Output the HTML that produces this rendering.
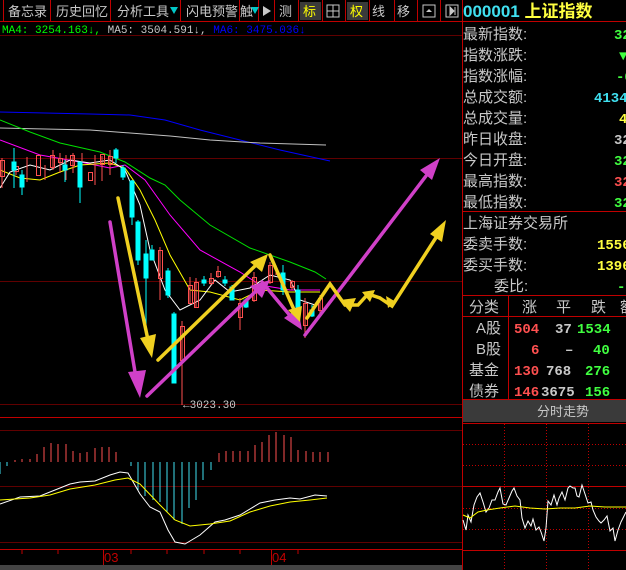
<!DOCTYPE html>
<html><head><meta charset="utf-8"><style>
body{margin:0;background:#000;width:626px;height:570px;overflow:hidden;position:relative;font-family:"Liberation Sans","WenQuanYi Zen Hei","Noto Sans CJK SC",sans-serif}
.t{position:absolute;white-space:nowrap;font-size:14px;color:#c8c8c8;line-height:16px}
</style></head><body>
<svg width="626" height="570" style="position:absolute;left:0;top:0" font-family="Liberation Sans, WenQuanYi Zen Hei, Noto Sans CJK SC, sans-serif">
<!-- toolbar -->
<g stroke="#c00000" fill="none">
<line x1="0" y1="21.5" x2="626" y2="21.5"/>
<line x1="3.5" y1="0" x2="3.5" y2="21"/><line x1="50.5" y1="0" x2="50.5" y2="21"/><line x1="110.5" y1="0" x2="110.5" y2="21"/><line x1="180.5" y1="0" x2="180.5" y2="21"/><line x1="239.5" y1="0" x2="239.5" y2="21"/><line x1="258.5" y1="0" x2="258.5" y2="21"/><line x1="274.5" y1="0" x2="274.5" y2="21"/><line x1="298.5" y1="0" x2="298.5" y2="21"/><line x1="322.5" y1="0" x2="322.5" y2="21"/><line x1="345.5" y1="0" x2="345.5" y2="21"/><line x1="369.5" y1="0" x2="369.5" y2="21"/><line x1="394.5" y1="0" x2="394.5" y2="21"/><line x1="417.5" y1="0" x2="417.5" y2="21"/><line x1="440.5" y1="0" x2="440.5" y2="21"/>
</g>
<rect x="300" y="2" width="21" height="18" fill="#3a3a3a"/><rect x="347" y="2" width="21" height="18" fill="#3a3a3a"/>
<g fill="#c8c8c8" font-size="13">
<text x="8" y="16">备忘录</text><text x="56" y="16">历史回忆</text><text x="117" y="16">分析工具</text><text x="186" y="16">闪电预警</text><text x="240" y="16">触</text><text x="279" y="16">测</text><text x="372" y="16">线</text><text x="397" y="16">移</text>
</g>
<text x="303" y="16" fill="#ffff00" font-size="13">标</text><text x="350" y="16" fill="#ffff00" font-size="13">权</text>
<path d="M170 7h8l-4 7z M251 7h8l-4 7z" fill="#00c8c8"/>
<path d="M263 6v10l8-5z" fill="#c8c8c8"/>
<rect x="327" y="5" width="12" height="12" fill="none" stroke="#c8c8c8"/><path d="M333 5v12M327 11h12" stroke="#c8c8c8"/>
<rect x="423" y="5" width="12" height="12" fill="none" stroke="#c8c8c8"/><path d="M426 12h6l-3-3z" fill="#c8c8c8"/>
<rect x="446" y="5" width="12" height="12" fill="none" stroke="#c8c8c8"/><path d="M450 7v8l4-4z M455 7v8" stroke="#c8c8c8" fill="#c8c8c8"/>
<!-- MA legend -->
<text x="2" y="33" font-size="11" font-family="Liberation Mono,monospace"><tspan fill="#00ff00">MA4: 3254.163↓,</tspan><tspan fill="#c8c8c8"> MA5: 3504.591↓,</tspan><tspan fill="#0000ff"> MA6: 3475.036↓</tspan></text>
<!-- main grid -->
<g stroke="#600000"><line x1="0" y1="35.5" x2="462" y2="35.5"/><line x1="0" y1="158.5" x2="462" y2="158.5"/><line x1="0" y1="281.5" x2="462" y2="281.5"/><line x1="0" y1="404.5" x2="462" y2="404.5"/><line x1="0" y1="430.5" x2="462" y2="430.5"/><line x1="0" y1="486.5" x2="462" y2="486.5"/><line x1="0" y1="542.5" x2="462" y2="542.5"/></g>
<line x1="0" y1="417.5" x2="462" y2="417.5" stroke="#c00000"/>
<line x1="0" y1="549.5" x2="462" y2="549.5" stroke="#c00000"/>
<line x1="462.5" y1="0" x2="462.5" y2="570" stroke="#c00000"/>
<rect x="0" y="565" width="462" height="5" fill="#444"/>
<g stroke="#c00000"><line x1="103.5" y1="549" x2="103.5" y2="565"/><line x1="271.5" y1="549" x2="271.5" y2="565"/><path d="M22 550v4M58 550v4M131 550v4M167 550v4M204 550v4M240 550v4M298 550v4"/></g>
<text x="104" y="562" fill="#c00000" font-size="13">03</text><text x="272" y="562" fill="#c00000" font-size="13">04</text>
<!-- MAs -->
<g fill="none" stroke-width="1">
<polyline stroke="#0000ff" points="0,112 90,114 130,115 165,120 200,130 240,140 280,150 330,161"/>
<polyline stroke="#c0c0c0" points="0,128 90,130 130,133 170,136 210,140 260,143 326,145"/>
<polyline stroke="#00e000" points="0,120 30,132 60,143 100,152 125,162 150,178 165,185 180,200 210,225 250,248 290,262 315,272 326,279"/>
<polyline stroke="#ff00ff" points="0,140 40,155 80,162 110,168 125,165 145,180 170,215 200,250 240,272 260,285 290,290 320,290"/>
<polyline stroke="#ffff00" points="0,170 20,178 40,180 60,172 80,165 110,163 125,168 140,190 155,220 170,255 190,290 210,292 240,300 260,290 290,292 320,292"/>
<polyline stroke="#ffffff" points="0,188 10,172 30,165 50,170 70,160 90,163 110,160 125,170 140,205 150,250 165,290 180,310 200,300 215,280 230,292 250,288 270,275 290,280 300,300 315,305 325,290"/>
</g>
<!-- candles -->
<g stroke-width="1">
<g stroke="#ff5050" fill="none">
<path d="M2 158v30M16 165v10M27 157v25M45 165v15M53 150v20M60 153v20M66 155v25M73 153v20M82 153v20M95 155v30M102 156v25M110 150v25M160 247v53M182 321v84M190 277v26M196 278v30M211 273v12M218 266v12M240 298v32M254 272v30M270 262v22M276 265v10M292 280v10M305 298v40M320 295v18"/>
<rect x="0.5" y="160.5" width="4" height="16"/><rect x="14.5" y="166.5" width="4" height="5"/><rect x="36.5" y="155.5" width="4" height="20"/><rect x="50.5" y="155.5" width="4" height="12"/><rect x="58.5" y="158.5" width="4" height="4"/><rect x="70.5" y="155.5" width="4" height="10"/><rect x="88.5" y="172.5" width="4" height="8"/><rect x="100.5" y="154.5" width="4" height="10"/><rect x="108.5" y="156.5" width="4" height="8"/><rect x="158.5" y="250.5" width="4" height="28"/><rect x="180.5" y="326.5" width="4" height="34"/><rect x="188.5" y="285.5" width="4" height="18"/><rect x="194.5" y="282.5" width="4" height="25"/><rect x="209.5" y="278.5" width="4" height="5"/><rect x="216.5" y="271.5" width="4" height="5"/><rect x="238.5" y="303.5" width="4" height="14"/><rect x="252.5" y="277.5" width="4" height="23"/><rect x="268.5" y="265.5" width="4" height="17"/><rect x="290.5" y="281.5" width="4" height="6"/><rect x="303.5" y="303.5" width="4" height="22"/><rect x="318.5" y="298.5" width="4" height="12"/>
</g>
<g stroke="#00ffff" fill="#00ffff">
<path d="M14 148v40M22 170v25M65 160v22M80 165v38M116 148v15M123 165v15M132 180v45M138 220v45M146 240v100M152 245v15M168 268v30M174 312v71M204 276v10M225 276v10M232 285v15M246 298v10M283 265v30M298 285v30M312 305v12"/>
<rect x="12" y="162" width="4" height="8"/><rect x="20" y="175" width="4" height="12"/><rect x="63" y="165" width="4" height="5"/><rect x="78" y="162" width="4" height="25"/><rect x="114" y="150" width="4" height="8"/><rect x="121" y="168" width="4" height="9"/><rect x="130" y="181" width="4" height="36"/><rect x="136" y="222" width="4" height="38"/><rect x="144" y="254" width="4" height="24"/><rect x="150" y="250" width="4" height="10"/><rect x="166" y="271" width="4" height="24"/><rect x="172" y="314" width="4" height="69"/><rect x="202" y="280" width="4" height="3"/><rect x="223" y="280" width="4" height="3"/><rect x="230" y="287" width="4" height="13"/><rect x="244" y="300" width="4" height="7"/><rect x="281" y="273" width="4" height="17"/><rect x="296" y="290" width="4" height="22"/><rect x="310" y="310" width="4" height="6"/>
</g>
</g>
<text x="183" y="408" fill="#c8c8c8" font-size="11" font-family="Liberation Mono,monospace">←3023.30</text>
<!-- arrows -->
<g stroke-width="3.5" fill="none" stroke-linecap="round">
<g stroke="#d040c8">
<line x1="110" y1="222" x2="136" y2="378"/><line x1="147" y1="396" x2="255" y2="292"/><line x1="262" y1="282" x2="292" y2="318"/><line x1="305" y1="335" x2="426" y2="176"/>
</g>
<g stroke="#f0d020">
<line x1="118" y1="198" x2="148" y2="340"/><line x1="158" y1="360" x2="255" y2="266"/><line x1="270" y1="255" x2="295" y2="312"/><polyline points="307,318 330,284 345,305 358,305 368,294 380,298 392,306 437,236"/>
</g>
</g>
<g stroke="none">
<g fill="#d040c8">
<polygon points="140,398 128,372 146,370"/><polygon points="270,280 250,286 262,298"/><polygon points="302,330 284,318 298,308"/><polygon points="440,158 420,170 432,180"/>
</g>
<g fill="#f0d020">
<polygon points="152,358 140,338 156,334"/><polygon points="268,254 250,262 262,272"/><polygon points="300,322 288,310 302,306"/><polygon points="350,312 340,300 356,298"/><polygon points="375,290 362,292 370,302"/><polygon points="396,302 386,296 388,308"/><polygon points="446,220 430,234 442,242"/>
</g>
</g>
<!-- MACD -->
<g stroke="#ff5050"><path d="M15 462v-2M22 462v-3M30 462v-3M37 462v-8M44 462v-15M51 462v-19M58 462v-18M66 462v-18M73 462v-11M80 462v-9M87 462v-10M95 462v-14M102 462v-15M109 462v-15M116 462v-10M219 462v-9M226 462v-11M233 462v-11M240 462v-11M248 462v-11M255 462v-17M262 462v-20M269 462v-27M276 462v-30M284 462v-27M291 462v-25M298 462v-12M306 462v-11M313 462v-10M320 462v-10M328 462v-10"/></g>
<g stroke="#40e0f0"><path d="M0 462v12M7 462v4M131 462v4M138 462v28M145 462v34M153 462v38M160 462v40M167 462v50M174 462v58M182 462v62M189 462v46M196 462v38M203 462v18M211 462v8"/></g>
<polyline fill="none" stroke="#ffffff" points="0,504 20,497 40,496 60,488 70,484 80,482 95,481 110,475 120,472 128,473 140,494 150,507 160,512 168,530 175,542 185,544 200,535 215,522 225,520 240,515 260,503 275,500 290,498 300,499 315,495 327,496"/>
<polyline fill="none" stroke="#ffff00" points="0,500 30,498 50,495 70,489 95,485 115,480 128,478 140,484 160,505 175,520 190,526 210,524 230,521 250,512 270,506 290,502 310,500 327,498"/>
<!-- right panel -->
<g stroke="#c00000"><line x1="462" y1="21.5" x2="626" y2="21.5"/><line x1="462" y1="211.5" x2="626" y2="211.5"/><line x1="462" y1="295.5" x2="626" y2="295.5"/><line x1="462" y1="316.5" x2="626" y2="316.5"/><line x1="462" y1="399.5" x2="626" y2="399.5"/><line x1="508.5" y1="296" x2="508.5" y2="399"/><line x1="462" y1="423.5" x2="626" y2="423.5"/></g>
<rect x="463" y="400" width="163" height="22" fill="#3a3a3a"/>
<text x="537" y="416" fill="#c8c8c8" font-size="13">分时走势</text>
<text x="463" y="17" font-size="17" font-weight="bold"><tspan fill="#40e0f0">000001</tspan><tspan fill="#ffff40"> 上证指数</tspan></text>
<g fill="#c8c8c8" font-size="15">
<text x="463" y="39">最新指数:</text><text x="463" y="60">指数涨跌:</text><text x="463" y="81">指数涨幅:</text><text x="463" y="102">总成交额:</text><text x="463" y="123">总成交量:</text><text x="463" y="144">昨日收盘:</text><text x="463" y="165">今日开盘:</text><text x="463" y="186">最高指数:</text><text x="463" y="207">最低指数:</text>
<text x="463" y="228">上海证券交易所</text><text x="463" y="249">委卖手数:</text><text x="463" y="270">委买手数:</text><text x="494" y="291">委比:</text>
<text x="469" y="312">分类</text><text x="522" y="312">涨</text><text x="556" y="312">平</text><text x="591" y="312">跌</text><text x="620" y="312">额</text>
<text x="476" y="333">A股</text><text x="476" y="354">B股</text><text x="469" y="375">基金</text><text x="469" y="396">债券</text>
</g>
<g font-size="14" font-weight="bold" font-family="Liberation Mono,monospace">
<text x="614" y="39" fill="#40ff40">32</text><text x="619" y="60" fill="#40ff40">▼</text><text x="616" y="81" fill="#40ff40">-0</text><text x="594" y="102" fill="#40e0f0">4134</text><text x="619" y="123" fill="#ffff40">4</text><text x="614" y="144" fill="#c8c8c8">32</text><text x="614" y="165" fill="#40ff40">32</text><text x="614" y="186" fill="#ff5050">32</text><text x="614" y="207" fill="#40ff40">32</text>
<text x="597" y="249" fill="#ffff40">1556</text><text x="597" y="270" fill="#ffff40">1396</text><text x="617" y="291" fill="#40ff40">-5</text>
<text x="514" y="333" fill="#ff5050">504</text><text x="555" y="333" fill="#c8c8c8">37</text><text x="577" y="333" fill="#40ff40">1534</text>
<text x="531" y="354" fill="#ff5050">6</text><text x="565" y="354" fill="#c8c8c8">–</text><text x="593" y="354" fill="#40ff40">40</text>
<text x="514" y="375" fill="#ff5050">130</text><text x="546" y="375" fill="#c8c8c8">768</text><text x="585" y="375" fill="#40ff40">276</text>
<text x="514" y="396" fill="#ff5050">146</text><text x="541" y="396" fill="#c8c8c8">3675</text><text x="585" y="396" fill="#40ff40">156</text>
</g>
<!-- intraday -->
<g stroke="#c00000" stroke-dasharray="1,2"><line x1="463" y1="444.5" x2="626" y2="444.5"/><line x1="463" y1="465.5" x2="626" y2="465.5"/><line x1="463" y1="508.5" x2="626" y2="508.5"/><line x1="463" y1="529.5" x2="626" y2="529.5"/><line x1="504.5" y1="424" x2="504.5" y2="570"/><line x1="546.5" y1="424" x2="546.5" y2="570"/><line x1="588.5" y1="424" x2="588.5" y2="570"/></g>
<g stroke="#c00000"><line x1="463" y1="486.5" x2="626" y2="486.5"/><line x1="463" y1="550.5" x2="626" y2="550.5"/></g>
<polyline fill="none" stroke="#ffffff" points="463,520 466,530 468,515 471,522 474,505 477,497 480,493 483,502 486,512 489,508 492,500 495,500 498,492 500,488 503,504 506,505 509,498 512,491 514,488 517,496 520,500 522,518 525,528 528,521 531,526 533,519 536,530 539,527 541,532 544,541 546,528 548,501 551,505 554,495 557,505 559,498 562,492 565,500 568,488 570,486 573,488 575,488 577,496 579,497 582,485 585,494 588,503 591,502 593,510 596,517 599,521 601,523 604,520 607,516 610,531 613,528 615,541 618,530 621,522 624,516 626,512"/>
<polyline fill="none" stroke="#ffff00" points="463,515 470,518 478,512 487,510 500,508 515,506 530,508 545,509 560,508 575,508 590,506 605,507 626,507"/>
</svg>
</body></html>
